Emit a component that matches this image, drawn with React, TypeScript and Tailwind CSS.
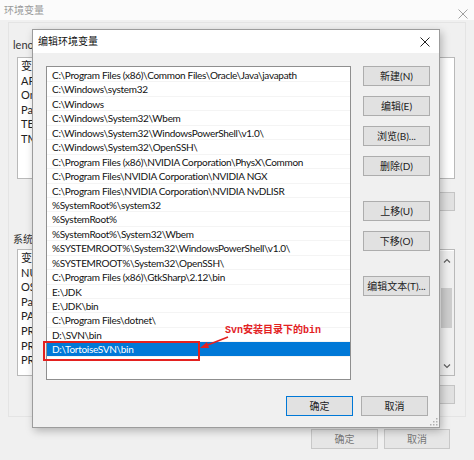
import React from 'react';

const font = { fontFamily: 'Lato, "Noto Sans CJK SC", sans-serif' };

const paths = [
  'C:\\Program Files (x86)\\Common Files\\Oracle\\Java\\javapath',
  'C:\\Windows\\system32',
  'C:\\Windows',
  'C:\\Windows\\System32\\Wbem',
  'C:\\Windows\\System32\\WindowsPowerShell\\v1.0\\',
  'C:\\Windows\\System32\\OpenSSH\\',
  'C:\\Program Files (x86)\\NVIDIA Corporation\\PhysX\\Common',
  'C:\\Program Files\\NVIDIA Corporation\\NVIDIA NGX',
  'C:\\Program Files\\NVIDIA Corporation\\NVIDIA NvDLISR',
  '%SystemRoot%\\system32',
  '%SystemRoot%',
  '%SystemRoot%\\System32\\Wbem',
  '%SYSTEMROOT%\\System32\\WindowsPowerShell\\v1.0\\',
  '%SYSTEMROOT%\\System32\\OpenSSH\\',
  'C:\\Program Files (x86)\\GtkSharp\\2.12\\bin',
  'E:\\JDK',
  'E:\\JDK\\bin',
  'C:\\Program Files\\dotnet\\',
  'D:\\SVN\\bin',
  'D:\\TortoiseSVN\\bin',
];

const userVars = ['变', 'AP', 'On', 'Pa', 'TE', 'TM'];
const sysVars = ['变', 'NU', 'OS', 'Pa', 'PA', 'PR', 'PR', 'PR'];

function WinButton({ label, primary = false }: { label: string; primary?: boolean }) {
  return (
    <div
      className={`w-[67px] h-[20px] flex items-center justify-center whitespace-nowrap text-[10px] text-[#222] bg-[#e1e1e1] ${
        primary ? 'border-[1.5px] border-[#0078d7]' : 'border border-[#adadad]'
      }`}
    >
      {label}
    </div>
  );
}

export default function App() {
  return (
    <div className="relative w-[474px] h-[460px] overflow-hidden bg-[#f0f0f0]" style={font}>
      {/* background window: 环境变量 */}
      <div className="h-[20px] bg-[#fbfbfb] flex items-center justify-between pl-[4px] pr-[6px]">
        <span className="text-[10px] text-[#9a9a9a] leading-none">环境变量</span>
        <svg width="10" height="10" viewBox="0 0 10 10" className="mt-[8px]">
          <path d="M0.5 0.5L9.5 9.5M9.5 0.5L0.5 9.5" stroke="#a0a0a0" strokeWidth="1" />
        </svg>
      </div>
      <div className="mx-[8px] mt-[2px] h-[395px] border border-[#e4e4e4] pt-[14px]">
        <div className="pl-[4px] w-[24px] overflow-hidden whitespace-nowrap text-[11px] text-[#333] leading-[16px]">leno</div>
        <div className="ml-[8px] mt-[4px] w-[438px] h-[122px] bg-white border border-[#b9b9b9] pt-[1px] text-[11px] text-[#222]">
          {userVars.map((v, i) => (
            <div key={i} className="h-[14.5px] leading-[14.5px] pl-[3px]">{v}</div>
          ))}
        </div>
        <div className="ml-[8px] mt-[13px] flex justify-end w-[438px]">
          <div className="w-[67px] h-[19px] bg-[#e1e1e1] border border-[#c4c4c4]" />
        </div>
        <div className="pl-[4px] mt-[20px] text-[10px] text-[#333] leading-[16px]">系统</div>
        <div className="ml-[8px] mt-[2px] w-[438px] h-[127px] bg-white border border-[#b9b9b9] pt-[1px] text-[11px] text-[#222] flex">
          <div className="flex-1">
            {sysVars.map((v, i) => (
              <div key={i} className="h-[14.6px] leading-[14.6px] pl-[3px]">{v}</div>
            ))}
          </div>
          <div className="w-[15px] h-full bg-[#f0f0f0] flex flex-col items-center">
            <svg width="8" height="6" viewBox="0 0 8 6" className="mt-[7px]">
              <path d="M1 4.5L4 1.5L7 4.5" stroke="#606060" fill="none" strokeWidth="1.2" />
            </svg>
            <div className="mt-[24px] w-[11px] h-[40px] bg-[#cdcdcd]" />
            <div className="flex-1" />
            <svg width="8" height="6" viewBox="0 0 8 6" className="mb-[6px]">
              <path d="M1 1.5L4 4.5L7 1.5" stroke="#606060" fill="none" strokeWidth="1.2" />
            </svg>
          </div>
        </div>
        <div className="ml-[8px] mt-[9px] flex justify-end w-[438px]">
          <div className="w-[67px] h-[19px] bg-[#e1e1e1] border border-[#c4c4c4]" />
        </div>
      </div>
      <div className="flex justify-end gap-[6px] pr-[24px] mt-[12px]">
        <div className="w-[67px] h-[20px] flex items-center justify-center text-[10px] text-[#777] bg-[#e6e6e6] border border-[#c8c8c8]">确定</div>
        <div className="w-[66px] h-[20px] flex items-center justify-center text-[10px] text-[#777] bg-[#e6e6e6] border border-[#c8c8c8]">取消</div>
      </div>

      {/* dialog window: 编辑环境变量 */}
      <div className="absolute left-[32px] top-[29px] w-[408px] h-[399px] bg-[#f0f0f0] border border-[#9c9c9c] shadow-[2px_3px_8px_rgba(0,0,0,0.25)] flex flex-col">
        <div className="h-[23px] bg-white flex items-center justify-between pl-[5px] pr-[9px] shrink-0">
          <span className="text-[10px] text-[#111]">编辑环境变量</span>
          <svg width="10" height="10" viewBox="0 0 10 10">
            <path d="M0.5 0.5L9.5 9.5M9.5 0.5L0.5 9.5" stroke="#222" strokeWidth="1" />
          </svg>
        </div>
        <div className="flex pl-[13px] pt-[13px] gap-[12px]">
          <div className="relative w-[305px] h-[314px] bg-white border border-[#8f8f8f] pt-[1px] text-[10px] tracking-[-0.3px] text-[#111]">
            {paths.map((p, i) => {
              const sel = i === paths.length - 1;
              return (
                <div
                  key={i}
                  className={`h-[14.45px] leading-[14.45px] pl-[5px] whitespace-nowrap overflow-hidden border-b border-[#f4f4f4] ${
                    sel ? 'bg-[#0078d7] text-white' : ''
                  }`}
                >
                  {p}
                </div>
              );
            })}
            {/* annotation */}
            <div className="absolute left-[-4px] top-[274px] w-[157px] h-[20px] border-2 border-[#e3211f]" />
            <svg className="absolute left-[152px] top-[268px]" width="30" height="16" viewBox="0 0 30 16">
              <path d="M29 2L6 11" stroke="#e3211f" strokeWidth="1.6" />
              <path d="M1 13L8 7L10 13Z" fill="#e3211f" />
            </svg>
            <div
              className="absolute left-[178px] top-[257px] text-[10px] tracking-normal leading-[14px] font-bold text-[#e3211f] whitespace-nowrap"
              style={{ fontFamily: '"Liberation Mono", "Noto Sans CJK SC", monospace' }}
            >
              Svn安装目录下的bin
            </div>
          </div>
          <div className="flex flex-col">
            <WinButton label="新建(N)" />
            <div className="mt-[10px]"><WinButton label="编辑(E)" /></div>
            <div className="mt-[10px]"><WinButton label="浏览(B)..." /></div>
            <div className="mt-[10px]"><WinButton label="删除(D)" /></div>
            <div className="mt-[25px]"><WinButton label="上移(U)" /></div>
            <div className="mt-[10px]"><WinButton label="下移(O)" /></div>
            <div className="mt-[25px]"><WinButton label="编辑文本(T)..." /></div>
          </div>
        </div>
        <div className="flex justify-end gap-[8px] pr-[11px] mt-[16px]">
          <WinButton label="确定" primary />
          <WinButton label="取消" />
        </div>
        <svg className="absolute right-[1px] bottom-[1px]" width="8" height="8" viewBox="0 0 8 8">
          <rect x="6" y="0" width="1.5" height="1.5" fill="#b0b0b0" />
          <rect x="3" y="3" width="1.5" height="1.5" fill="#b0b0b0" />
          <rect x="6" y="3" width="1.5" height="1.5" fill="#b0b0b0" />
          <rect x="0" y="6" width="1.5" height="1.5" fill="#b0b0b0" />
          <rect x="3" y="6" width="1.5" height="1.5" fill="#b0b0b0" />
          <rect x="6" y="6" width="1.5" height="1.5" fill="#b0b0b0" />
        </svg>
      </div>
    </div>
  );
}
